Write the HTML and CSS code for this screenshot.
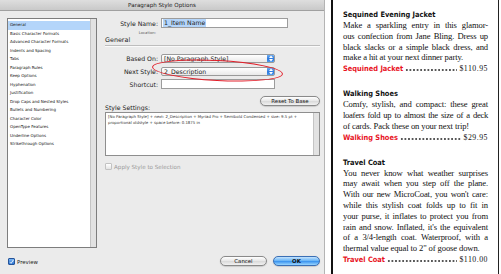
FILE: index.html
```html
<!DOCTYPE html>
<html lang="en">
<head>
    <meta charset="UTF-8">
    <title>Paragraph Style Options</title>
    <link rel="stylesheet" href="styles.css">
</head>
<body>
    <div class="page">
        <div class="dialog">
            <div class="titlebar">Paragraph Style Options</div>
            <div class="dialog-body">
                <div class="side">
                    <div class="category-list">
                        <ul class="categories">
                            <li class="selected">General</li>
                            <li>Basic Character Formats</li>
                            <li>Advanced Character Formats</li>
                            <li>Indents and Spacing</li>
                            <li>Tabs</li>
                            <li>Paragraph Rules</li>
                            <li>Keep Options</li>
                            <li>Hyphenation</li>
                            <li>Justification</li>
                            <li>Drop Caps and Nested Styles</li>
                            <li>Bullets and Numbering</li>
                            <li>Character Color</li>
                            <li>OpenType Features</li>
                            <li>Underline Options</li>
                            <li>Strikethrough Options</li>
                        </ul>
                        <div class="track"></div>
                    </div>
                    <div class="check preview">
                        <span class="box checked">
                            <svg width="8" height="8" viewBox="0 0 8 8"><path d="M1.5 4.2 L3.3 6.2 L7 0.8" fill="none" stroke="#fff" stroke-width="1.4"/></svg>
                        </span>
                        Preview
                    </div>
                </div>

                <div class="form">
                    <div class="field">
                        <span class="field-label">Style Name:</span>
                        <div class="text-input name-input"><span class="selection">1_Item Name</span></div>
                    </div>
                    <div class="location">Location:</div>
                    <div class="section-title">General</div>

                    <div class="field based">
                        <span class="field-label">Based On:</span>
                        <div class="popup">
                            <span>[No Paragraph Style]</span>
                            <span class="stepper"><svg width="4" height="7" viewBox="0 0 4 7"><path d="M0 3 L2 0.5 L4 3 Z M0 4 L2 6.5 L4 4 Z" fill="#fff"/></svg></span>
                        </div>
                    </div>
                    <div class="field next">
                        <span class="field-label">Next Style:</span>
                        <div class="popup">
                            <span>2_Description</span>
                            <span class="stepper"><svg width="4" height="7" viewBox="0 0 4 7"><path d="M0 3 L2 0.5 L4 3 Z M0 4 L2 6.5 L4 4 Z" fill="#fff"/></svg></span>
                        </div>
                    </div>
                    <div class="field shortcut">
                        <span class="field-label">Shortcut:</span>
                        <div class="text-input shortcut-input"></div>
                    </div>

                    <div class="settings-head">
                        <span class="settings-label">Style Settings:</span>
                        <button class="pill">Reset To Base</button>
                    </div>
                    <div class="settings-box">
                        <p>[No Paragraph Style] + next: 2_Description + Myriad Pro + Semibold Condensed + size: 9.5 pt + proportional oldstyle + space before: 0.1875 in</p>
                        <div class="track"></div>
                    </div>

                    <div class="check disabled">
                        <span class="box"></span>
                        Apply Style to Selection
                    </div>

                    <div class="actions">
                        <button class="pill">Cancel</button>
                        <button class="pill default">OK</button>
                    </div>

                    <!-- hand-drawn circle around the Next Style popup -->
                    <div class="annotation"></div>
                </div>
            </div>
        </div>

        <div class="gutter"></div>

        <div class="catalog">
            <div class="item">
                <h3>Sequined Evening Jacket</h3>
                <p>
                    <span class="line">Make a sparkling entry in this glamor-</span>
                    <span class="line">ous confection from Jane Bling. Dress up</span>
                    <span class="line">black slacks or a simple black dress, and</span>
                    <span class="line">make a hit at your next dinner party.</span>
                </p>
                <div class="price-line"><span class="name">Sequined Jacket</span><span class="leader"></span><span class="price">$110.95</span></div>
            </div>
            <div class="item">
                <h3>Walking Shoes</h3>
                <p>
                    <span class="line">Comfy, stylish, and compact: these great</span>
                    <span class="line tight">loafers fold up to almost the size of a deck</span>
                    <span class="line">of cards. Pack these on your next trip!</span>
                </p>
                <div class="price-line"><span class="name">Walking Shoes</span><span class="leader"></span><span class="price">$29.95</span></div>
            </div>
            <div class="item">
                <h3>Travel Coat</h3>
                <p>
                    <span class="line">You never know what weather surprises</span>
                    <span class="line">may await when you step off the plane.</span>
                    <span class="line">With our new MicroCoat, you won't care:</span>
                    <span class="line">while this stylish coat folds up to fit in</span>
                    <span class="line">your purse, it inflates to protect you from</span>
                    <span class="line">rain and snow. Inflated, it's the equivalent</span>
                    <span class="line">of a 3/4-length coat. Waterproof, with a</span>
                    <span class="line">thermal value equal to 2" of goose down.</span>
                </p>
                <div class="price-line"><span class="name">Travel Coat</span><span class="leader"></span><span class="price">$110.00</span></div>
            </div>
        </div>
    </div>
</body>
</html>
```

FILE: styles.css
```css
body {
    margin: 0;
    padding: 0;
    background: white;
    font-family: "DejaVu Sans", sans-serif;
}

.page {
    display: flex;
    width: 501px;
    height: 274px;
    overflow: hidden;
}

/* ---------- dialog ---------- */

.dialog {
    width: 324px;
    height: 274px;
    background: #ebebeb;
    border-right: 1px solid #b4b4b4;
    display: flex;
    flex-direction: column;
    flex-shrink: 0;
}

.titlebar {
    height: 10px;
    line-height: 10px;
    text-align: center;
    font-size: 5.6px;
    color: #222;
    background: linear-gradient(#dedede, #c9c9c9);
    border-bottom: 1px solid #a0a0a0;
}

.dialog-body {
    flex: 1;
    display: flex;
    padding: 7px 4px 8px 7px;
}

.side {
    width: 90px;
    display: flex;
    flex-direction: column;
}

.category-list {
    height: 228px;
    background: white;
    border: 1px solid #7d7d7d;
    display: flex;
}

.categories {
    list-style: none;
    margin: 0;
    padding: 2px 0 0;
    flex: 1;
}

.categories li {
    height: 8.5px;
    line-height: 8.5px;
    font-size: 4px;
    padding-left: 2px;
    color: #111;
}

.categories li.selected {
    background: #b4d5fa;
}

.track {
    width: 5px;
    background: #e2e2e2;
    border-left: 1px solid #c4c4c4;
}

.check {
    display: flex;
    align-items: center;
    gap: 2px;
    font-size: 5.4px;
    color: #222;
}

.preview {
    margin-top: 10px;
    padding-left: 1px;
}

.box {
    width: 7px;
    height: 7px;
    border: 1px solid #9a9a9a;
    border-radius: 1px;
    background: linear-gradient(#fff, #e4e4e4);
    box-sizing: border-box;
    display: flex;
    align-items: center;
    justify-content: center;
}

.box.checked {
    background: linear-gradient(#7ab7f4, #2a73d2);
    border-color: #25549a;
}

/* ---------- form ---------- */

.form {
    position: relative;
    width: 215px;
    margin-left: 8px;
    display: flex;
    flex-direction: column;
    font-size: 6.2px;
    color: #222;
}

.field {
    display: flex;
    align-items: center;
}

.field-label {
    width: 53px;
    margin-right: 3px;
    text-align: right;
}

.text-input {
    height: 10px;
    background: white;
    border: 1px solid #9c9c9c;
    box-sizing: border-box;
    display: flex;
    align-items: center;
    padding-left: 1px;
}

.name-input {
    width: 127px;
}

.selection {
    background: #b4d5fa;
    line-height: 8px;
    padding: 0 1px;
}

.location {
    width: 51px;
    text-align: right;
    font-size: 3.8px;
    color: #555;
    margin-top: 2px;
    line-height: 6px;
}

.section-title {
    font-size: 6.4px;
    line-height: 8px;
    padding-bottom: 1px;
    border-bottom: 1px solid #bdbdbd;
    box-shadow: 0 1px 0 #fafafa;
}

.based {
    margin-top: 8px;
}

.next {
    margin-top: 4px;
}

.shortcut {
    margin-top: 3px;
}

.popup {
    width: 114px;
    height: 9px;
    box-sizing: border-box;
    border: 1px solid #9a9a9a;
    border-radius: 2px;
    background: linear-gradient(#ffffff, #e9e9e9);
    display: flex;
    align-items: center;
    justify-content: space-between;
    padding-left: 2px;
    overflow: hidden;
}

.stepper {
    width: 7px;
    height: 9px;
    background: linear-gradient(#7fbaf5, #2a78df 55%, #5ea7f0);
    display: flex;
    align-items: center;
    justify-content: center;
}

.shortcut-input {
    width: 114px;
}

.settings-head {
    display: flex;
    justify-content: space-between;
    align-items: flex-start;
    height: 16px;
    margin-top: 7px;
}

.settings-label {
    align-self: flex-end;
    line-height: 8px;
}

.pill {
    font-family: "DejaVu Sans", sans-serif;
    font-size: 5.4px;
    color: #111;
    height: 10px;
    padding: 0;
    border: 1px solid #8a8a8a;
    border-radius: 5px;
    background: linear-gradient(#ffffff, #e6e6e6 50%, #d8d8d8 51%, #f2f2f2);
    box-shadow: 0 0.5px 1px rgba(0, 0, 0, 0.25);
}

.settings-head .pill {
    width: 60px;
}

.settings-box {
    height: 44px;
    box-sizing: border-box;
    background: white;
    border: 1px solid #8e8e8e;
    display: flex;
}

.settings-box p {
    flex: 1;
    margin: 0;
    padding: 1px 2px;
    font-size: 3.9px;
    line-height: 5.5px;
    color: #333;
}

.disabled {
    margin-top: 7px;
    color: #9a9a9a;
    font-size: 5.6px;
}

.disabled .box {
    border-color: #c2c2c2;
}

.actions {
    margin-top: auto;
    display: flex;
    justify-content: flex-end;
    gap: 6px;
}

.actions .pill {
    width: 47px;
}

.pill.default {
    font-weight: bold;
    border-color: #3a6fb5;
    background: linear-gradient(#c4e3fd, #6cb6f7 45%, #3d95ef 55%, #9ad6ff);
}

.annotation {
    position: absolute;
    left: 47px;
    top: 42px;
    width: 131px;
    height: 21px;
    border: 1.4px solid #e2202b;
    border-radius: 50%;
    transform: rotate(3deg);
    box-sizing: border-box;
}

/* ---------- catalog page ---------- */

.gutter {
    width: 6px;
    border-right: 2px solid #111;
    flex-shrink: 0;
}

.catalog {
    width: 145px;
    padding: 9px 10px 0 10px;
    border-right: 1px solid #222;
    flex-shrink: 0;
}

.item {
    margin-bottom: 13px;
}

.item h3 {
    margin: 0;
    font-family: "Liberation Sans Narrow", "DejaVu Sans Condensed", sans-serif;
    font-stretch: condensed;
    font-weight: bold;
    font-size: 7.4px;
    line-height: 11px;
    color: #111;
}

.item p {
    margin: 0;
    font-family: "Liberation Serif", serif;
    font-size: 8.6px;
    letter-spacing: -0.12px;
    line-height: 10.8px;
    color: #111;
}

/* set lines as in the printed layout, justified except the last */
.line {
    display: block;
    text-align: justify;
    text-align-last: justify;
}

.line:last-child {
    text-align-last: left;
}

.line.tight {
    letter-spacing: -0.3px;
}

.price-line {
    display: flex;
    align-items: baseline;
    line-height: 12px;
}

.price-line .name {
    font-family: "Liberation Sans Narrow", "DejaVu Sans Condensed", sans-serif;
    font-stretch: condensed;
    font-weight: bold;
    font-size: 7.4px;
    color: #e8141f;
}

.leader {
    flex: 1;
    height: 2px;
    margin: 0 2px;
    background: radial-gradient(circle, #222 0.6px, transparent 0.9px) repeat-x left center / 3.6px 2px;
}

.price {
    font-family: "Liberation Serif", serif;
    font-size: 7.8px;
    letter-spacing: 0.5px;
    color: #111;
}
```
